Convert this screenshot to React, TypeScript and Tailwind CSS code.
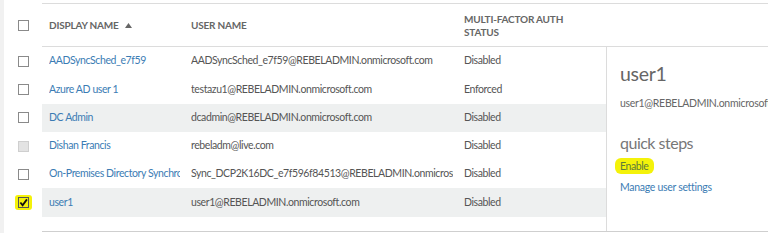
import React from "react";

type User = {
  name: string;
  upn: string;
  status: string;
  shaded?: boolean;
  disabledBox?: boolean;
  checked?: boolean;
};

const users: User[] = [
  { name: "AADSyncSched_e7f59", upn: "AADSyncSched_e7f59@REBELADMIN.onmicrosoft.com", status: "Disabled" },
  { name: "Azure AD user 1", upn: "testazu1@REBELADMIN.onmicrosoft.com", status: "Enforced" },
  { name: "DC Admin", upn: "dcadmin@REBELADMIN.onmicrosoft.com", status: "Disabled", shaded: true },
  { name: "Dishan Francis", upn: "rebeladm@live.com", status: "Disabled", disabledBox: true },
  { name: "On-Premises Directory Synchronization Service Account", upn: "Sync_DCP2K16DC_e7f596f84513@REBELADMIN.onmicrosoft.com", status: "Disabled" },
  { name: "user1", upn: "user1@REBELADMIN.onmicrosoft.com", status: "Disabled", shaded: true, checked: true },
];

function Checkbox({ checked, disabled }: { checked?: boolean; disabled?: boolean }) {
  if (checked) {
    return (
      <div className="flex h-[15px] w-[17px] items-center justify-center rounded-[3px] bg-[#f4f20a]">
        <div className="flex h-[11px] w-[11px] items-center justify-center border border-[#555] bg-[#f4f20a]">
          <svg width="10" height="9" viewBox="0 0 10 9">
            <path d="M1.5 4.5 L4 7.5 L8.8 1" fill="none" stroke="#111" strokeWidth="2" />
          </svg>
        </div>
      </div>
    );
  }
  return (
    <div
      className={
        disabled
          ? "h-[11px] w-[11px] border border-[#cfcfcf] bg-[#e3e3e3]"
          : "h-[11px] w-[11px] border border-[#8a8a8a] bg-white"
      }
    />
  );
}

export default function App() {
  return (
    <div
      className="flex h-[233px] w-[768px] overflow-hidden bg-white text-[10.5px] tracking-[-0.4px] text-[#555]"
      style={{ fontFamily: 'Lato, "Open Sans", sans-serif' }}
    >
      {/* left edge strip */}
      <div className="w-[4px] shrink-0 bg-[#f1f1f1]" />

      <div className="flex flex-1 flex-col pt-[3px]">
        {/* header */}
        <div className="flex h-[44px] shrink-0">
          <div className="flex w-[38px] shrink-0 items-center justify-center pl-[1px]">
            <Checkbox />
          </div>
          <div className="flex flex-1 items-center border-y border-[#dcdcdc] text-[10px] font-bold uppercase leading-[13px] tracking-[-0.2px] text-[#666]">
            <div className="flex w-[149px] items-center gap-[6px] pl-[7px]">
              Display name
              <svg width="7" height="5" viewBox="0 0 7 5">
                <path d="M0 5 L3.5 0 L7 5 Z" fill="#666" />
              </svg>
            </div>
            <div className="w-[273px]">User name</div>
            <div className="w-[142px] pt-[1px]">
              Multi-factor auth
              <br />
              status
            </div>
          </div>
        </div>

        {/* body */}
        <div className="flex flex-1">
          <div className="flex w-[602px] shrink-0 flex-col">
            {users.map((u) => (
              <div key={u.name} className="flex h-[28.3px] items-center">
                <div className="flex w-[38px] shrink-0 items-center justify-center pl-[1px]">
                  <Checkbox checked={u.checked} disabled={u.disabledBox} />
                </div>
                <div
                  className={
                    "flex h-full flex-1 items-center " + (u.shaded ? "bg-[#eef0f0]" : "")
                  }
                >
                  <div className="w-[149px] shrink-0 pl-[7px] pr-[11px]">
                    <div className="overflow-hidden whitespace-nowrap text-[#3b7cb4]">{u.name}</div>
                  </div>
                  <div className="w-[273px] shrink-0 pr-[11px]">
                    <div className="overflow-hidden whitespace-nowrap">{u.upn}</div>
                  </div>
                  <div className="w-[142px]">{u.status}</div>
                </div>
              </div>
            ))}
          </div>

          {/* details panel */}
          <div className="flex flex-1 flex-col border-l border-[#dcdcdc] pl-[13px] pt-[14px]">
            <div className="text-[19.5px] leading-[26px] tracking-[-0.3px] text-[#666]">user1</div>
            <div className="relative mt-[9px] overflow-hidden whitespace-nowrap text-[10.5px] tracking-[-0.3px] text-[#666]">
              user1@REBELADMIN.onmicrosoft.com
              <div className="absolute inset-y-0 right-0 w-[22px] bg-gradient-to-r from-transparent to-white" />
            </div>
            <div className="mt-[20px] text-[16px] leading-[22px] tracking-[-0.5px] text-[#777]">quick steps</div>
            <div className="mt-[4px] flex">
              <span className="-ml-[5px] rounded-[6px] bg-[#f4f20a] px-[5px] py-[1px] leading-[14px] text-[#5c7a3a]">
                Enable
              </span>
            </div>
            <div className="mt-[6px] tracking-[-0.3px] text-[#3b7cb4]">Manage user settings</div>
          </div>
        </div>

        {/* bottom rule */}
        <div className="ml-[38px] h-[2px] shrink-0 border-t border-[#cfcfcf]" />
      </div>
    </div>
  );
}
